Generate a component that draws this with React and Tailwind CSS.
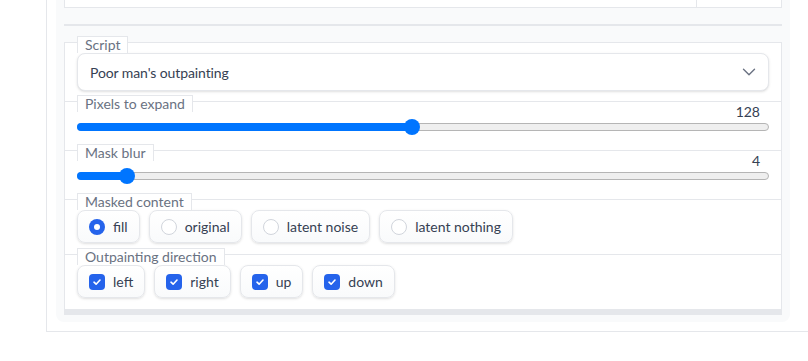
import React from 'react';
import { ChevronDown } from 'lucide-react';

const font = { fontFamily: 'Lato, "Noto Sans", sans-serif' };

const BlockLabel = ({ children }) => (
  <div className="relative -mt-[7px] flex h-[17px]">
    <span className="border-l border-t border-r border-gray-200 bg-white px-[7px] text-[14px] leading-[16px] text-gray-500">
      {children}
    </span>
  </div>
);

const Slider = ({ label, value, min, max }) => {
  const pct = (value - min) / (max - min);
  const center = `calc(8px + (100% - 16px) * ${pct})`;
  return (
    <div className="border-t border-gray-200 px-3 pb-[15px]">
      <BlockLabel>{label}</BlockLabel>
      <div className="-mt-[8px] flex h-[16px] justify-end pr-[9px] text-[14px] leading-[16px] text-gray-700">
        {value}
      </div>
      <div className="relative -mt-[1px] flex h-[16px] items-center">
        <div className="h-[8px] w-full rounded-full border border-[#b5b5b5] bg-[#efefef]" />
        <div
          className="absolute left-0 top-[4px] h-[8px] rounded-l-full bg-[#0075ff]"
          style={{ width: center }}
        />
        <div
          className="absolute top-0 h-[16px] w-[16px] -translate-x-1/2 rounded-full bg-[#0075ff]"
          style={{ left: center }}
        />
      </div>
    </div>
  );
};

const Radio = ({ label, checked }) => (
  <div className="flex h-[33px] items-center gap-2 rounded-lg border border-gray-200 bg-linear-to-b from-white to-gray-50 px-[11px] text-[14px] text-gray-700 shadow-sm">
    {checked ? (
      <span className="flex h-[16px] w-[16px] items-center justify-center rounded-full bg-[#2563eb]">
        <span className="h-[6px] w-[6px] rounded-full bg-white" />
      </span>
    ) : (
      <span className="h-[16px] w-[16px] rounded-full border border-gray-300 bg-white" />
    )}
    {label}
  </div>
);

const Check = ({ label }) => (
  <div className="flex h-[33px] items-center gap-2 rounded-lg border border-gray-200 bg-linear-to-b from-white to-gray-50 px-[11px] text-[14px] text-gray-700 shadow-sm">
    <span className="flex h-[16px] w-[16px] items-center justify-center rounded-[4px] bg-[#2563eb]">
      <svg width="10" height="10" viewBox="0 0 10 10" fill="none">
        <path d="M2 5.2 4.1 7.2 8 3" stroke="white" strokeWidth="1.6" strokeLinecap="round" strokeLinejoin="round" />
      </svg>
    </span>
    {label}
  </div>
);

export default function App() {
  return (
    <div className="h-[361px] w-[808px] overflow-hidden bg-white" style={font}>
      <div className="ml-[46px] border-b border-l border-gray-200 pb-[9px] pl-[9px]">
        <div className="w-[734px] rounded-b-lg bg-gray-50 px-2 pb-[7px]">
          {/* tail of the block above */}
          <div className="flex h-[8px] border-x border-b border-gray-200 bg-white">
            <div className="flex-1 border-r border-gray-200" />
            <div className="w-[84px]" />
          </div>
          <div className="mt-4 h-[2px] bg-gray-200" />

          <div className="mt-4 border-x border-gray-200 bg-white">
            {/* Script */}
            <div className="border-t border-gray-200 px-3 pb-[10px]">
              <BlockLabel>Script</BlockLabel>
              <div className="flex h-[38px] items-center justify-between rounded-lg border border-gray-200 bg-white pl-3 pr-2 text-[14px] tracking-[-0.1px] text-gray-700 shadow-sm">
                <span>Poor man's outpainting</span>
                <ChevronDown size={22} strokeWidth={1.5} className="text-gray-500" />
              </div>
            </div>

            <Slider label="Pixels to expand" value={128} min={8} max={256} />
            <Slider label="Mask blur" value={4} min={0} max={64} />

            {/* Masked content */}
            <div className="border-t border-gray-200 px-3 pb-[11px]">
              <BlockLabel>Masked content</BlockLabel>
              <div className="flex gap-[9px]">
                <Radio label="fill" checked />
                <Radio label="original" />
                <Radio label="latent noise" />
                <Radio label="latent nothing" />
              </div>
            </div>

            {/* Outpainting direction */}
            <div className="border-t border-gray-200 px-3 pb-[11px]">
              <BlockLabel>Outpainting direction</BlockLabel>
              <div className="flex gap-[9px]">
                <Check label="left" />
                <Check label="right" />
                <Check label="up" />
                <Check label="down" />
              </div>
            </div>
          </div>
          <div className="h-[6px] bg-gray-200" />
        </div>
      </div>
    </div>
  );
}
